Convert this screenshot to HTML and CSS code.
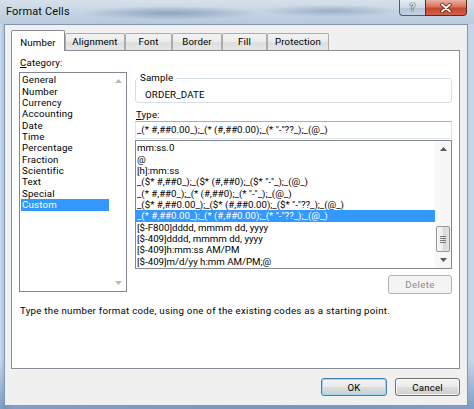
FILE: index.html
```html
<!DOCTYPE html>
<html>
<head>
<meta charset="utf-8">
<title>Format Cells</title>
<link rel="stylesheet" href="styles.css">
</head>
<body>
<div class="window">
  <div class="titlebar">
    <div class="title">Format Cells</div>
    <div class="caption-btns">
      <div class="cbtn help">?</div>
      <div class="cbtn close">
        <svg width="12" height="10" viewBox="0 0 12 10"><path d="M2 1.5 L10 8.5 M10 1.5 L2 8.5" stroke="#4a1a12" stroke-width="3.4" stroke-linecap="round"/><path d="M2 1.5 L10 8.5 M10 1.5 L2 8.5" stroke="#ffffff" stroke-width="1.9" stroke-linecap="round"/></svg>
      </div>
    </div>
  </div>
  <div class="client">
    <div class="tabs">
      <div class="tab active w-number">Number</div>
      <div class="tab w-align">Alignment</div>
      <div class="tab w-font">Font</div>
      <div class="tab w-border">Border</div>
      <div class="tab w-fill">Fill</div>
      <div class="tab w-prot">Protection</div>
    </div>
    <div class="panel">
      <div class="cols">
        <div class="leftcol">
          <div class="label"><u>C</u>ategory:</div>
          <div class="catlist">
            <div class="items cat-items">
              <div class="item">General</div>
              <div class="item">Number</div>
              <div class="item">Currency</div>
              <div class="item">Accounting</div>
              <div class="item">Date</div>
              <div class="item">Time</div>
              <div class="item">Percentage</div>
              <div class="item">Fraction</div>
              <div class="item">Scientific</div>
              <div class="item">Text</div>
              <div class="item">Special</div>
              <div class="item selected">Custom</div>
            </div>
            <div class="vscroll disabled">
              <div class="arrow"><svg width="7" height="4" viewBox="0 0 7 4"><path d="M0 4 L3.5 0 L7 4 Z"/></svg></div>
              <div class="arrow"><svg width="7" height="4" viewBox="0 0 7 4"><path d="M0 0 L3.5 4 L7 0 Z"/></svg></div>
            </div>
          </div>
        </div>
        <div class="rightcol">
          <fieldset class="sample">
            <legend>Sample</legend>
            <div class="sample-val">ORDER_DATE</div>
          </fieldset>
          <div class="label type-label"><u>T</u>ype:</div>
          <div class="typebox">_(* #,##0.00_);_(* (#,##0.00);_(* "-"??_);_(@_)</div>
          <div class="typelist">
            <div class="items type-items">
              <div class="item">mm:ss.0</div>
              <div class="item">@</div>
              <div class="item">[h]:mm:ss</div>
              <div class="item">_($* #,##0_);_($* (#,##0);_($* "-"_);_(@_)</div>
              <div class="item">_(* #,##0_);_(* (#,##0);_(* "-"_);_(@_)</div>
              <div class="item">_($* #,##0.00_);_($* (#,##0.00);_($* "-"??_);_(@_)</div>
              <div class="item selected">_(* #,##0.00_);_(* (#,##0.00);_(* "-"??_);_(@_)</div>
              <div class="item">[$-F800]dddd, mmmm dd, yyyy</div>
              <div class="item">[$-409]dddd, mmmm dd, yyyy</div>
              <div class="item">[$-409]h:mm:ss AM/PM</div>
              <div class="item">[$-409]m/d/yy h:mm AM/PM;@</div>
            </div>
            <div class="vscroll">
              <div class="arrow"><svg width="7" height="4" viewBox="0 0 7 4"><path d="M0 4 L3.5 0 L7 4 Z"/></svg></div>
              <div class="track">
                <div class="thumb"><span></span><span></span><span></span><span></span></div>
              </div>
              <div class="arrow"><svg width="7" height="4" viewBox="0 0 7 4"><path d="M0 0 L3.5 4 L7 0 Z"/></svg></div>
            </div>
          </div>
          <div class="delete-row"><div class="btn disabled w-delete">Delete</div></div>
        </div>
      </div>
      <div class="desc">Type the number format code, using one of the existing codes as a starting point.</div>
    </div>
    <div class="footer">
      <div class="btn default w-ok">OK</div>
      <div class="btn w-cancel">Cancel</div>
    </div>
  </div>
</div>
</body>
</html>
```

FILE: styles.css
```css
* { box-sizing: border-box; }
html, body { margin: 0; padding: 0; }
body {
  width: 474px;
  height: 409px;
  overflow: hidden;
  font-family: Roboto, "Open Sans", sans-serif;
  font-size: 9.7px;
  color: #000;
}
.window {
  width: 474px;
  height: 409px;
  display: flex;
  flex-direction: column;
  background:
    linear-gradient(180deg, rgba(255,255,255,0) 88%, rgba(70,110,160,0.55) 100%),
    linear-gradient(90deg, #c9dbee 0%, #a9c2dc 1%, #c6d8ea 3%, #b8cce0 40%, #aec4da 70%, #c4d6e9 100%);
}
.titlebar {
  height: 24px;
  display: flex;
  justify-content: space-between;
  align-items: flex-start;
  background:
    radial-gradient(ellipse 90px 7px at 170px 13px, rgba(95,125,160,0.55), rgba(95,125,160,0)),
    radial-gradient(ellipse 70px 6px at 330px 11px, rgba(95,125,160,0.45), rgba(95,125,160,0)),
    linear-gradient(180deg, #d6e0ea 0%, #c3d2e2 60%, #b6c9dc 100%);
}
.title {
  padding-left: 6px;
  line-height: 24px;
  font-size: 11px;
  letter-spacing: 0.15px;
  color: #0c0c0c;
}
.caption-btns {
  display: flex;
  margin-right: 7px;
}
.cbtn {
  height: 16px;
  display: flex;
  align-items: center;
  justify-content: center;
  border: 1px solid #4d5c70;
  border-top: none;
}
.help {
  width: 26px;
  border-radius: 0 0 0 4px;
  border-right: none;
  background: linear-gradient(180deg, #e6edf4 0%, #cdd9e5 50%, #b5c6d8 51%, #c3d3e3 100%);
  font-weight: bold;
  font-size: 11px;
  color: #eef2f6;
  text-shadow: 0 0 1px #2b3846, 0 0 1px #2b3846, 0 0 1px #2b3846;
}
.close {
  width: 42px;
  border-radius: 0 0 4px 0;
  border-color: #5b2c22;
  background: linear-gradient(180deg, #eab0a2 0%, #d9735d 45%, #c7452c 55%, #d2634a 100%);
}
.client {
  flex: 1;
  margin: 0 6px 3px 4px;
  border: 1px solid #8496ab;
  background: #f0f0f0;
  display: flex;
  flex-direction: column;
}
.tabs {
  display: flex;
  align-items: flex-end;
  height: 20px;
  margin: 5px 0 0 6px;
}
.tab {
  height: 17px;
  border: 1px solid #acacac;
  border-bottom: none;
  border-radius: 2px 2px 0 0;
  background: linear-gradient(180deg, #f3f3f3 0%, #ebebeb 50%, #dedede 51%, #e6e6e6 100%);
  text-align: center;
  line-height: 15px;
  letter-spacing: 0.15px;
  white-space: nowrap;
}
.tab.active {
  height: 21px;
  margin-bottom: -1px;
  position: relative;
  z-index: 1;
  background: #fff;
  border-color: #898c95;
  padding-top: 4px;
}
.w-number { width: 54px; }
.w-align { width: 60px; }
.w-font { width: 47px; }
.w-border { width: 50px; }
.w-fill { width: 45px; }
.w-prot { width: 62px; }
.panel {
  height: 319px;
  margin: 0 7px 0 6px;
  border: 1px solid #898c95;
  background: #fff;
  padding: 0 7px;
}
.cols {
  display: flex;
  gap: 8px;
  align-items: flex-start;
}
.leftcol {
  width: 108px;
  padding-top: 6px;
}
.label {
  height: 12px;
  line-height: 12px;
  padding-left: 1px;
  letter-spacing: 0.15px;
}
.catlist {
  margin-top: 3px;
  height: 220px;
  border: 1px solid #828790;
  display: flex;
}
.items { flex: 1; min-width: 0; }
.item {
  height: 11.35px;
  line-height: 11.35px;
  white-space: nowrap;
  overflow: hidden;
}
.item.selected {
  background: #3399ff;
  color: #fff;
}
.cat-items { padding: 1.4px 1px 0; }
.cat-items .item { padding-left: 1px; letter-spacing: 0.2px; }
.type-items { padding-top: 1.3px; }
.type-items .item { padding-left: 1px; }
.vscroll {
  width: 16px;
  display: flex;
  flex-direction: column;
  justify-content: space-between;
  background: #f7f7f7;
}
.vscroll.disabled { background: #fff; }
.arrow {
  height: 16px;
  display: flex;
  align-items: center;
  justify-content: center;
}
.arrow svg { fill: #5a5a5a; }
.vscroll.disabled .arrow svg { fill: #b9b9b9; }
.track {
  flex: 1;
  display: flex;
  flex-direction: column;
}
.thumb {
  margin: 69px 1px 0 1px;
  height: 26px;
  border: 1px solid #999;
  border-radius: 2px;
  background: linear-gradient(90deg, #f6f6f6 0%, #ececec 50%, #d9d9d9 51%, #e2e2e2 100%);
  display: flex;
  flex-direction: column;
  align-items: center;
  justify-content: center;
  gap: 1px;
}
.thumb span {
  width: 6px;
  height: 1px;
  background: #777;
}
.rightcol {
  width: 317px;
}
.sample {
  margin: 21px 0 0;
  padding: 5px 0 1px 2px;
  border: 1px solid #d5dfe5;
  border-radius: 3px;
  min-width: 0;
}
.sample legend {
  padding: 0 2px;
  line-height: 12px;
  letter-spacing: 0.15px;
}
.sample-val {
  height: 12px;
  line-height: 12px;
  padding-left: 7px;
  letter-spacing: 0.15px;
}
.type-label { margin-top: 6px; }
.typebox {
  height: 18px;
  border: 1px solid #abadb3;
  border-color: #abadb3 #dbdfe6 #e3e9ef #e2e3ea;
  line-height: 16px;
  padding-left: 1px;
  white-space: nowrap;
  overflow: hidden;
}
.typelist {
  margin-top: 1px;
  height: 129px;
  border: 1px solid #828790;
  display: flex;
}
.delete-row {
  display: flex;
  justify-content: flex-end;
  margin-top: 6px;
}
.btn {
  height: 18px;
  border: 1px solid #707070;
  border-radius: 3px;
  background: linear-gradient(180deg, #f2f2f2 0%, #ebebeb 50%, #dddddd 51%, #cfcfcf 100%);
  box-shadow: inset 0 0 0 1px rgba(255,255,255,0.7);
  display: flex;
  align-items: center;
  justify-content: center;
  letter-spacing: 0.15px;
}
.btn.disabled {
  border-color: #adb2b5;
  background: #f4f4f4;
  color: #8d8d8d;
  box-shadow: none;
  letter-spacing: 0.4px;
}
.btn.default {
  border-color: #3c7fb1;
  box-shadow: inset 0 0 0 1px #9fd8ef;
}
.w-delete { width: 64px; height: 19px; }
.w-ok { width: 66px; }
.w-cancel { width: 65px; }
.desc {
  margin-top: 11px;
  line-height: 12px;
  padding-left: 1px;
  letter-spacing: 0.27px;
  white-space: nowrap;
}
.footer {
  display: flex;
  justify-content: flex-end;
  gap: 8px;
  margin: 9px 7px 0 0;
}
```
